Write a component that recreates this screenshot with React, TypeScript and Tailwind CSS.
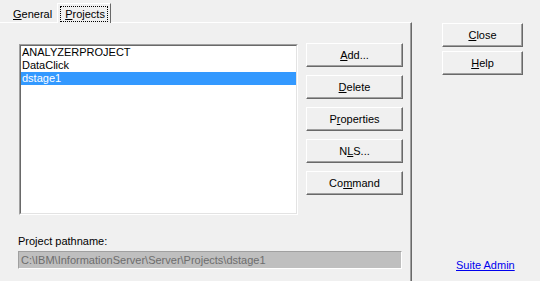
const font = { fontFamily: '"Liberation Sans", Arial, sans-serif' };

function Btn({ children, w = "w-[97px]" }: { children: React.ReactNode; w?: string }) {
  return (
    <div
      className={`${w} h-[24px] flex items-center justify-center bg-[#f0f0f0] border border-t-white border-l-white border-r-[#696969] border-b-[#696969] shadow-[inset_-1px_-1px_0_#a0a0a0] text-[11px] text-black`}
    >
      {children}
    </div>
  );
}

const projects = ["ANALYZERPROJECT", "DataClick", "dstage1"];

export default function App() {
  const selected = "dstage1";
  return (
    <div className="w-[540px] h-[281px] bg-[#f0f0f0] flex overflow-hidden text-[11px] leading-[13px] text-black" style={font}>
      {/* tabbed panel */}
      <div className="w-[412px] flex flex-col">
        <div className="h-[22px] flex items-end pl-[10px]">
          <div className="h-[17px] px-[3px] pt-[3px]">
            <u>G</u>eneral
          </div>
          <div className="relative z-10 -mb-px ml-[2px] w-[54px] h-[20px] bg-[#f0f0f0] border-t border-l border-r border-t-white border-l-white border-r-[#696969] pt-[2px] pl-[2px]">
            <div className="border border-dotted border-black h-[16px] w-[48px] flex items-center pl-[4px]">
              <u>P</u>rojects
            </div>
          </div>
        </div>
        <div className="flex-1 border-t border-t-white border-r border-r-[#696969] shadow-[inset_-1px_0_0_#a0a0a0] pt-[21px] pl-[18px]">
          <div className="flex">
            <div className="ml-px w-[279px] h-[171px] border border-t-[#a0a0a0] border-l-[#a0a0a0] border-r-white border-b-white">
              <div className="h-full bg-white border border-t-[#696969] border-l-[#696969] border-r-[#e3e3e3] border-b-[#e3e3e3]">
                {projects.map((p) => (
                  <div
                    key={p}
                    className={`h-[13px] pl-px leading-[13px] ${p === selected ? "bg-[#3399ff] text-white" : ""}`}
                  >
                    {p}
                  </div>
                ))}
              </div>
            </div>
            <div className="ml-[8px] -mt-px flex flex-col gap-[8px]">
              <Btn>
                <u>A</u>dd...
              </Btn>
              <Btn>
                <u>D</u>elete
              </Btn>
              <Btn>
                P<u>r</u>operties
              </Btn>
              <Btn>
                N<u>L</u>S...
              </Btn>
              <Btn>
                Co<u>m</u>mand
              </Btn>
            </div>
          </div>
          <div className="mt-[20px]">Project pathname:</div>
          <div className="mt-[3px] w-[384px] h-[18px] bg-[#bfbfbf] border border-t-[#a0a0a0] border-l-[#a0a0a0] border-r-white border-b-white flex items-center pl-[2px] text-[#6d6d6d]">
            C:\IBM\InformationServer\Server\Projects\dstage1
          </div>
        </div>
      </div>
      {/* right column */}
      <div className="flex-1 flex flex-col pt-[23px] pl-[30px]">
        <div className="flex flex-col gap-[4px]">
          <Btn w="w-[81px]">
            <u>C</u>lose
          </Btn>
          <Btn w="w-[81px]">
            <u>H</u>elp
          </Btn>
        </div>
        <div className="mt-auto mb-[9px] ml-[14px] text-[#0000ee] underline">Suite Admin</div>
      </div>
    </div>
  );
}
